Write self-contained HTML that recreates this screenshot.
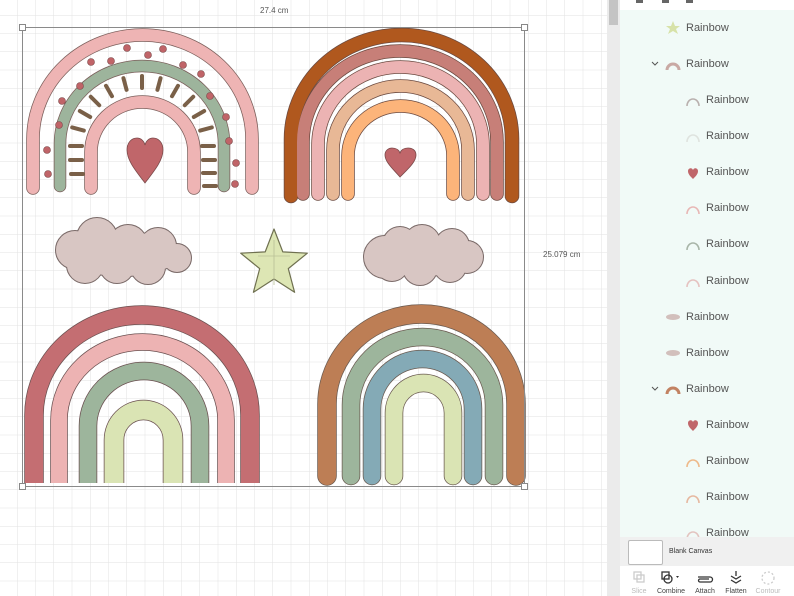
<!DOCTYPE html>
<html><head><meta charset="utf-8"><style>
html,body{margin:0;padding:0;width:794px;height:596px;overflow:hidden;background:#fff;font-family:"Liberation Sans",sans-serif}
.abs{position:absolute}
.row{position:absolute;font-size:11px;color:#555;line-height:12px}
.tb{position:absolute;top:588px;font-size:7px;color:#444;text-align:center;width:40px}
</style></head><body>
<svg class="abs" style="left:0;top:0" width="607" height="596" viewBox="0 0 607 596">
<defs>
<pattern id="g" x="17" y="15" width="18.25" height="18.25" patternUnits="userSpaceOnUse">
<path d="M0,0 V18.25 M0,0 H18.25" stroke="#e2e2e2" stroke-width="1" fill="none"/>
</pattern>
</defs>
<rect width="607" height="596" fill="url(#g)"/>
<g fill="none" stroke-linecap="round">
<g stroke="#7a5e5a">
<path d="M33,188 L33,139 A109.5,104 0 0 1 252,139 L252,188" stroke-width="13.5"/>
<path d="M60,186 L60,144 A82,78 0 0 1 224,144 L224,186" stroke-width="12.5"/>
<path d="M91,188 L91,152 A51.5,50 0 0 1 194,152 L194,188" stroke-width="13.5"/>
</g>
<path d="M33,188 L33,139 A109.5,104 0 0 1 252,139 L252,188" stroke="#eeb4b4" stroke-width="12"/>
<path d="M60,186 L60,144 A82,78 0 0 1 224,144 L224,186" stroke="#9db49c" stroke-width="11"/>
<path d="M91,188 L91,152 A51.5,50 0 0 1 194,152 L194,188" stroke="#eeb4b4" stroke-width="12"/>
<g stroke="#6b4a40">
<path d="M291,196 L291,139 A110.5,104 0 0 1 512,139 L512,196" stroke-width="14.5"/>
<path d="M303,194 L303,142 A97,91 0 0 1 497,142 L497,194" stroke-width="13.5"/>
<path d="M318,194 L318,145 A82.5,78 0 0 1 483,145 L483,194" stroke-width="13.5"/>
<path d="M333,194 L333,150 A67.5,64 0 0 1 468,150 L468,194" stroke-width="13.5"/>
<path d="M348,194 L348,156 A52.5,50 0 0 1 453,156 L453,194" stroke-width="13.5"/>
</g>
<path d="M291,196 L291,139 A110.5,104 0 0 1 512,139 L512,196" stroke="#b0581e" stroke-width="13"/>
<path d="M303,194 L303,142 A97,91 0 0 1 497,142 L497,194" stroke="#c77f78" stroke-width="12"/>
<path d="M318,194 L318,145 A82.5,78 0 0 1 483,145 L483,194" stroke="#ecb3b3" stroke-width="12"/>
<path d="M333,194 L333,150 A67.5,64 0 0 1 468,150 L468,194" stroke="#e8b896" stroke-width="12"/>
<path d="M348,194 L348,156 A52.5,50 0 0 1 453,156 L453,194" stroke="#fcb47a" stroke-width="12"/>
<g stroke="#6a5a50">
<path d="M327,476 L327,404 A94.5,90 0 0 1 516,404 L516,476" stroke-width="19.5"/>
<path d="M351,476 L351,405 A71.5,68 0 0 1 494,405 L494,476" stroke-width="18.5"/>
<path d="M372,476 L372,409 A50.5,50 0 0 1 473,409 L473,476" stroke-width="18.5"/>
<path d="M394,476 L394,413 A29.5,30 0 0 1 453,413 L453,476" stroke-width="18.5"/>
</g>
<path d="M327,476 L327,404 A94.5,90 0 0 1 516,404 L516,476" stroke="#bd7e55" stroke-width="18"/>
<path d="M351,476 L351,405 A71.5,68 0 0 1 494,405 L494,476" stroke="#9db59c" stroke-width="17"/>
<path d="M372,476 L372,409 A50.5,50 0 0 1 473,409 L473,476" stroke="#84aab6" stroke-width="17"/>
<path d="M394,476 L394,413 A29.5,30 0 0 1 453,413 L453,476" stroke="#dae4b4" stroke-width="17"/>
</g>
<g fill="none" stroke-linecap="butt">
<g stroke="#6a5050">
<path d="M34,483 L34,415 A108,100 0 0 1 250,415 L250,483" stroke-width="19.5"/>
<path d="M59,483 L59,420 A83.5,78 0 0 1 226,420 L226,483" stroke-width="17.5"/>
<path d="M88,483 L88,426 A56,55 0 0 1 200,426 L200,483" stroke-width="18.5"/>
<path d="M114,483 L114,440 A29.5,30 0 0 1 173,440 L173,483" stroke-width="20.5"/>
</g>
<path d="M34,483 L34,415 A108,100 0 0 1 250,415 L250,483" stroke="#c46e72" stroke-width="18"/>
<path d="M59,483 L59,420 A83.5,78 0 0 1 226,420 L226,483" stroke="#edb3b3" stroke-width="16"/>
<path d="M88,483 L88,426 A56,55 0 0 1 200,426 L200,483" stroke="#9db59c" stroke-width="17"/>
<path d="M114,483 L114,440 A29.5,30 0 0 1 173,440 L173,483" stroke="#dae4b4" stroke-width="19"/>
</g>
<g fill="#c06468" stroke="#7a4a4a" stroke-width="0.6">
<circle cx="127" cy="48" r="3.5"/><circle cx="148" cy="55" r="3.5"/><circle cx="163" cy="49" r="3.5"/>
<circle cx="91" cy="62" r="3.5"/><circle cx="111" cy="61" r="3.5"/><circle cx="183" cy="65" r="3.5"/>
<circle cx="201" cy="74" r="3.5"/><circle cx="80" cy="86" r="3.5"/><circle cx="210" cy="96" r="3.5"/>
<circle cx="62" cy="101" r="3.5"/><circle cx="226" cy="117" r="3.5"/><circle cx="59" cy="125" r="3.5"/>
<circle cx="229" cy="141" r="3.5"/><circle cx="47" cy="150" r="3.5"/><circle cx="236" cy="163" r="3.5"/>
<circle cx="48" cy="174" r="3.5"/><circle cx="235" cy="184" r="3.5"/>
</g>
<g stroke="#7a6048" stroke-width="4" stroke-linecap="round">
<line x1="-6" x2="6" y1="0" y2="0" transform="translate(76,146)"/>
<line x1="-6" x2="6" y1="0" y2="0" transform="translate(78,129) rotate(-165)"/>
<line x1="-6" x2="6" y1="0" y2="0" transform="translate(85,114) rotate(-150)"/>
<line x1="-6" x2="6" y1="0" y2="0" transform="translate(95,101) rotate(-135)"/>
<line x1="-6" x2="6" y1="0" y2="0" transform="translate(109,91) rotate(-120)"/>
<line x1="-6" x2="6" y1="0" y2="0" transform="translate(125,84) rotate(-105)"/>
<line x1="-6" x2="6" y1="0" y2="0" transform="translate(142,82) rotate(-90)"/>
<line x1="-6" x2="6" y1="0" y2="0" transform="translate(159,84) rotate(-75)"/>
<line x1="-6" x2="6" y1="0" y2="0" transform="translate(175,91) rotate(-60)"/>
<line x1="-6" x2="6" y1="0" y2="0" transform="translate(189,101) rotate(-45)"/>
<line x1="-6" x2="6" y1="0" y2="0" transform="translate(199,114) rotate(-30)"/>
<line x1="-6" x2="6" y1="0" y2="0" transform="translate(206,129) rotate(-15)"/>
<line x1="-6" x2="6" y1="0" y2="0" transform="translate(208,146)"/>
<line x1="-6" x2="6" y1="0" y2="0" transform="translate(76,160)"/>
<line x1="-6" x2="6" y1="0" y2="0" transform="translate(77,174)"/>
<line x1="-6" x2="6" y1="0" y2="0" transform="translate(209,160)"/>
<line x1="-6" x2="6" y1="0" y2="0" transform="translate(209,173)"/>
<line x1="-6" x2="6" y1="0" y2="0" transform="translate(210,186)"/>
</g>
<path d="M145,183 C135,170 127,160 127,150 C127,142 132,138 137,138 C141,138 144,141 145,145 C146,141 149,138 153,138 C158,138 163,142 163,150 C163,160 155,170 145,183 Z" fill="#c0666a" stroke="#7a4a4a" stroke-width="0.8"/>
<path d="M400,177 C393,169 385,162 385,155 C385,150 389,148 392,148 C396,148 399,150 400,153 C401,150 404,148 408,148 C412,148 416,150 416,155 C416,162 408,169 400,177 Z" fill="#c0666a" stroke="#7a4a4a" stroke-width="0.8"/>
<!-- clouds -->
<g stroke="#7a6a68" stroke-width="2" fill="#7a6a68">
<ellipse cx="122" cy="254" rx="58" ry="22"/><circle cx="75" cy="250" r="19"/><circle cx="97" cy="238" r="20"/><circle cx="128" cy="244" r="19"/><circle cx="158" cy="246" r="18"/><circle cx="177" cy="258" r="14"/><circle cx="85" cy="265" r="18"/><circle cx="117" cy="266" r="17"/><circle cx="148" cy="267" r="17"/>
<ellipse cx="423" cy="256" rx="50" ry="20"/><circle cx="385" cy="257" r="21"/><circle cx="400" cy="244" r="17"/><circle cx="422" cy="243" r="18"/><circle cx="452" cy="246" r="17"/><circle cx="467" cy="257" r="16"/><circle cx="392" cy="265" r="16"/><circle cx="420" cy="268" r="17"/><circle cx="450" cy="266" r="16"/>
</g>
<g fill="#d8c6c3">
<ellipse cx="122" cy="254" rx="58" ry="22"/><circle cx="75" cy="250" r="19"/><circle cx="97" cy="238" r="20"/><circle cx="128" cy="244" r="19"/><circle cx="158" cy="246" r="18"/><circle cx="177" cy="258" r="14"/><circle cx="85" cy="265" r="18"/><circle cx="117" cy="266" r="17"/><circle cx="148" cy="267" r="17"/>
<ellipse cx="423" cy="256" rx="50" ry="20"/><circle cx="385" cy="257" r="21"/><circle cx="400" cy="244" r="17"/><circle cx="422" cy="243" r="18"/><circle cx="452" cy="246" r="17"/><circle cx="467" cy="257" r="16"/><circle cx="392" cy="265" r="16"/><circle cx="420" cy="268" r="17"/><circle cx="450" cy="266" r="16"/>
</g>
<polygon points="274,229 282.8,251.9 307.3,253.2 288.3,268.6 294.6,292.3 274,279 253.4,292.3 259.7,268.6 240.7,253.2 265.2,251.9" fill="#dde6b4" stroke="#6f7050" stroke-width="1.2" stroke-linejoin="round"/>
<path d="M274,240 V285 M258,256 H290" stroke="#b9c096" stroke-width="0.8"/>
<rect x="22.5" y="27.5" width="502" height="459" fill="none" stroke="#8a8a8a" stroke-width="1"/>
<g fill="#fff" stroke="#888" stroke-width="1">
<rect x="19.5" y="24.5" width="6" height="6"/><rect x="521.5" y="24.5" width="6" height="6"/>
<rect x="19.5" y="483.5" width="6" height="6"/><rect x="521.5" y="483.5" width="6" height="6"/>
</g>
<text x="260" y="13" font-size="8" fill="#555" font-family="Liberation Sans">27.4 cm</text>
<text x="543" y="257" font-size="8" fill="#555" font-family="Liberation Sans">25.079 cm</text>
</svg>
<div class="abs" style="left:607px;top:0;width:13px;height:596px;background:#ebebeb"></div>
<div class="abs" style="left:609px;top:0;width:9px;height:25px;background:#c4c4c4"></div>
<div class="abs" style="left:620px;top:0;width:174px;height:10px;background:#fff"></div>
<div class="abs" style="left:620px;top:10px;width:174px;height:528px;background:#f1faf7"></div>
<svg class="abs" style="left:620px;top:0" width="174" height="538" viewBox="620 0 174 538">
<rect x="636" y="0" width="7" height="3" fill="#666"/><rect x="662" y="0" width="7" height="3" fill="#666"/><rect x="686" y="0" width="7" height="3" fill="#666"/>
<polygon points="673,21 675,26 680,26 676,29 678,34 673,31 668,34 670,29 666,26 671,26" fill="#d7e2a8"/>
<path d="M652,62 l3,3 l3,-3" stroke="#555" fill="none"/>
<path d="M652,387 l3,3 l3,-3" stroke="#555" fill="none"/>
<path d="M667,70 A6,6 0 0 1 679,70" stroke="#c9a9a4" stroke-width="3" fill="none"/>
<path d="M667,394 A6,6 0 0 1 679,394" stroke="#c28262" stroke-width="3" fill="none"/>
<g fill="none" stroke-width="1.6">
<path d="M687,106 A6,7 0 0 1 699,106" stroke="#b9b0ae"/>
<path d="M687,142 A6,7 0 0 1 699,142" stroke="#dfe3df"/>
<path d="M687,214 A6,7 0 0 1 699,214" stroke="#e8b7b5"/>
<path d="M687,250 A6,7 0 0 1 699,250" stroke="#a8b5a8"/>
<path d="M687,287 A6,7 0 0 1 699,287" stroke="#e5c2c0"/>
<path d="M687,467 A6,7 0 0 1 699,467" stroke="#eeb98a"/>
<path d="M687,503 A6,7 0 0 1 699,503" stroke="#e6b8a0"/>
<path d="M687,539 A6,7 0 0 1 699,539" stroke="#e3c4c0"/>
</g>
<path d="M693,179 C690,176 688,174 688,171 C688,168 692,167 693,170 C694,167 698,168 698,171 C698,174 696,176 693,179Z" fill="#c0666a"/>
<path d="M693,431 C690,428 688,426 688,423 C688,420 692,419 693,422 C694,419 698,420 698,423 C698,426 696,428 693,431Z" fill="#c0666a"/>
<ellipse cx="673" cy="317" rx="7" ry="3" fill="#d2bfbc"/>
<ellipse cx="673" cy="353" rx="7" ry="3" fill="#d2bfbc"/>
</svg>
<div class="row" style="left:686px;top:22px">Rainbow</div>
<div class="row" style="left:686px;top:58px">Rainbow</div>
<div class="row" style="left:706px;top:94px">Rainbow</div>
<div class="row" style="left:706px;top:130px">Rainbow</div>
<div class="row" style="left:706px;top:166px">Rainbow</div>
<div class="row" style="left:706px;top:202px">Rainbow</div>
<div class="row" style="left:706px;top:238px">Rainbow</div>
<div class="row" style="left:706px;top:275px">Rainbow</div>
<div class="row" style="left:686px;top:311px">Rainbow</div>
<div class="row" style="left:686px;top:347px">Rainbow</div>
<div class="row" style="left:686px;top:383px">Rainbow</div>
<div class="row" style="left:706px;top:419px">Rainbow</div>
<div class="row" style="left:706px;top:455px">Rainbow</div>
<div class="row" style="left:706px;top:491px">Rainbow</div>
<div class="row" style="left:706px;top:527px">Rainbow</div>
<div class="abs" style="left:620px;top:537px;width:174px;height:29px;background:#f0f0f0"></div>
<div class="abs" style="left:628px;top:540px;width:33px;height:23px;background:#fff;border:1px solid #bbb;border-radius:2px"></div>
<div class="abs" style="left:669px;top:548px;font-size:7px;color:#333">Blank Canvas</div>
<div class="abs" style="left:620px;top:566px;width:174px;height:30px;background:#fff"></div>
<svg class="abs" style="left:620px;top:566px" width="174" height="22" viewBox="620 566 174 22">
<g fill="none" stroke-width="1.3">
<rect x="634" y="572" width="7" height="7" stroke="#ccc"/><rect x="637" y="575" width="7" height="7" stroke="#ccc"/>
<rect x="662" y="572" width="7" height="7" stroke="#333"/><circle cx="668" cy="579" r="4" stroke="#333"/>
<path d="M698,577 h12 a2.5,2.5 0 0 1 0,5 h-10 a1.5,1.5 0 0 1 0,-3 h9" stroke="#333"/>
<path d="M731,576 l5,3 l5,-3 M731,580 l5,3 l5,-3 M736,571 v5" stroke="#333"/>
<circle cx="768" cy="578" r="6" stroke="#ccc" stroke-dasharray="2 2"/>
</g>
<path d="M676,576 l3,0 l-1.5,2z" fill="#333"/>
</svg>
<div class="tb" style="left:619px;color:#bbb">Slice</div>
<div class="tb" style="left:651px">Combine</div>
<div class="tb" style="left:685px">Attach</div>
<div class="tb" style="left:716px">Flatten</div>
<div class="tb" style="left:748px;color:#bbb">Contour</div>
</body></html>
